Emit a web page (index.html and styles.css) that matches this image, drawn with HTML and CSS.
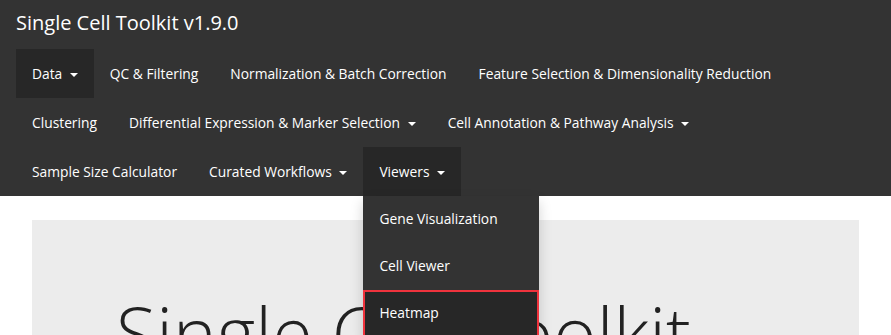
FILE: index.html
```html
<!DOCTYPE html>
<html>
<head>
<meta charset="utf-8">
<link rel="stylesheet" href="styles.css">
</head>
<body>
<nav class="navbar">
  <div class="brand">Single Cell Toolkit v1.9.0</div>
  <ul class="nav">
    <li class="item active">Data <span class="caret"></span></li>
    <li class="item">QC &amp; Filtering</li>
    <li class="item">Normalization &amp; Batch Correction</li>
    <li class="item">Feature Selection &amp; Dimensionality Reduction</li>
    <li class="item">Clustering</li>
    <li class="item">Differential Expression &amp; Marker Selection <span class="caret"></span></li>
    <li class="item">Cell Annotation &amp; Pathway Analysis <span class="caret"></span></li>
    <li class="item">Sample Size Calculator</li>
    <li class="item">Curated Workflows <span class="caret"></span></li>
    <li class="item active open">Viewers <span class="caret"></span>
      <ul class="dropdown">
        <li class="ditem">Gene Visualization</li>
        <li class="ditem">Cell Viewer</li>
        <li class="ditem selected">Heatmap</li>
      </ul>
    </li>
  </ul>
</nav>
<main class="content">
  <section class="jumbotron">
    <h1 class="hero">Single Cell Toolkit</h1>
  </section>
</main>
</body>
</html>
```
FILE: styles.css
```css
* { box-sizing: border-box; }
html, body { margin: 0; padding: 0; }
body {
  font-family: "Open Sans", "Liberation Sans", sans-serif;
  background: #fff;
  color: #222;
  overflow: hidden;
  height: 335px;
}
.navbar {
  background: #333333;
  padding: 0 16px;
}
.brand {
  height: 49px;
  line-height: 46px;
  font-size: 20px;
  color: #fff;
}
.nav {
  list-style: none;
  margin: 0;
  padding: 0;
  display: flex;
  flex-wrap: wrap;
  width: 860px;
}
.item {
  position: relative;
  height: 49px;
  line-height: 49px;
  padding: 0 16px;
  font-size: 13.8px;
  color: #fff;
  white-space: nowrap;
}
.item.active { background: #272727; }
.caret {
  display: inline-block;
  width: 0;
  height: 0;
  margin-left: 4px;
  vertical-align: middle;
  border-top: 4px solid #fff;
  border-left: 4px solid transparent;
  border-right: 4px solid transparent;
}
.dropdown {
  position: absolute;
  top: 49px;
  left: 0;
  width: 176px;
  list-style: none;
  margin: 0;
  padding: 0;
  background: #333333;
  box-shadow: 0 6px 12px rgba(0,0,0,0.18);
  z-index: 10;
}
.ditem {
  height: 47px;
  line-height: 46px;
  padding: 0 16px;
  font-size: 13.8px;
  color: #fff;
}
.ditem.selected {
  background: #272727;
  border: 2px solid #ef333d;
  padding: 0 14px;
  line-height: 42px;
}
.content {
  padding: 24px 32px 0;
}
.jumbotron {
  background: #ececec;
  height: 200px;
  padding: 72px 0 0 84px;
}
.hero {
  margin: 0;
  font-size: 74px;
  font-weight: 300;
  color: #222;
  line-height: 1.1;
  white-space: nowrap;
}
```
